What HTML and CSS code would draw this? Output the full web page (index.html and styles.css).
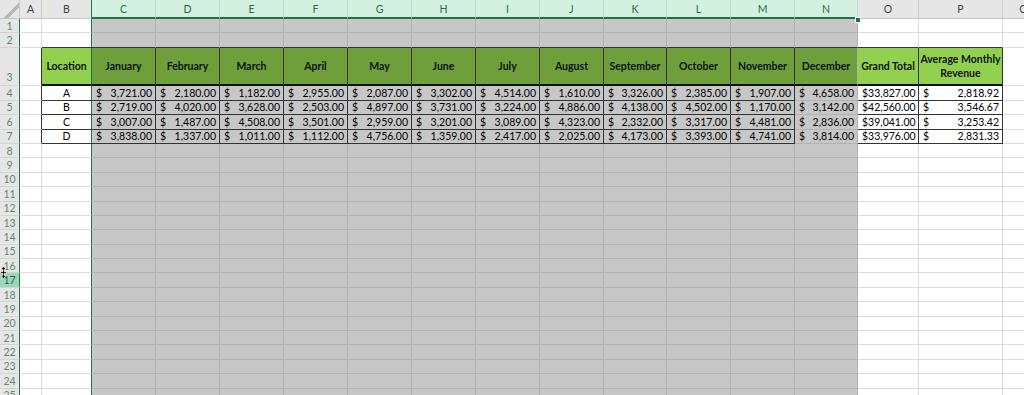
FILE: index.html
```html
<!DOCTYPE html>
<html>
<head>
<meta charset="utf-8">
<title>Revenue by Location</title>
<link rel="stylesheet" href="styles.css">
</head>
<body>
<div class="sheet">
  <div class="row hdr">
    <div class="corner"></div><div>A</div><div>B</div><div>C</div><div>D</div><div>E</div><div>F</div><div>G</div><div>H</div><div>I</div><div>J</div><div>K</div><div>L</div><div>M</div><div>N</div><div>O</div><div>P</div><div>Q</div>
  </div>
  <div class="row">
    <div>1</div><div></div><div></div><div></div><div></div><div></div><div></div><div></div><div></div><div></div><div></div><div></div><div></div><div></div><div class="act"></div><div></div><div></div><div></div>
  </div>
  <div class="row r2">
    <div>2</div><div></div><div></div><div></div><div></div><div></div><div></div><div></div><div></div><div></div><div></div><div></div><div></div><div></div><div></div><div></div><div></div><div></div>
  </div>
  <div class="row r3 tb">
    <div>3</div><div></div><div>Location</div><div>January</div><div>February</div><div>March</div><div>April</div><div>May</div><div>June</div><div>July</div><div>August</div><div>September</div><div>October</div><div>November</div><div>December</div><div>Grand Total</div><div>Average Monthly Revenue</div><div></div>
  </div>
  <div class="row d tb">
    <div>4</div><div></div><div>A</div>
    <div><span>$</span><span>3,721.00</span></div><div><span>$</span><span>2,180.00</span></div><div><span>$</span><span>1,182.00</span></div><div><span>$</span><span>2,955.00</span></div><div><span>$</span><span>2,087.00</span></div><div><span>$</span><span>3,302.00</span></div><div><span>$</span><span>4,514.00</span></div><div><span>$</span><span>1,610.00</span></div><div><span>$</span><span>3,326.00</span></div><div><span>$</span><span>2,385.00</span></div><div><span>$</span><span>1,907.00</span></div><div><span>$</span><span>4,658.00</span></div>
    <div><span>$</span><span>33,827.00</span></div><div><span>$</span><span>2,818.92</span></div><div></div>
  </div>
  <div class="row d tb">
    <div>5</div><div></div><div>B</div>
    <div><span>$</span><span>2,719.00</span></div><div><span>$</span><span>4,020.00</span></div><div><span>$</span><span>3,628.00</span></div><div><span>$</span><span>2,503.00</span></div><div><span>$</span><span>4,897.00</span></div><div><span>$</span><span>3,731.00</span></div><div><span>$</span><span>3,224.00</span></div><div><span>$</span><span>4,886.00</span></div><div><span>$</span><span>4,138.00</span></div><div><span>$</span><span>4,502.00</span></div><div><span>$</span><span>1,170.00</span></div><div><span>$</span><span>3,142.00</span></div>
    <div><span>$</span><span>42,560.00</span></div><div><span>$</span><span>3,546.67</span></div><div></div>
  </div>
  <div class="row d tb">
    <div>6</div><div></div><div>C</div>
    <div><span>$</span><span>3,007.00</span></div><div><span>$</span><span>1,487.00</span></div><div><span>$</span><span>4,508.00</span></div><div><span>$</span><span>3,501.00</span></div><div><span>$</span><span>2,959.00</span></div><div><span>$</span><span>3,201.00</span></div><div><span>$</span><span>3,089.00</span></div><div><span>$</span><span>4,323.00</span></div><div><span>$</span><span>2,332.00</span></div><div><span>$</span><span>3,317.00</span></div><div><span>$</span><span>4,481.00</span></div><div><span>$</span><span>2,836.00</span></div>
    <div><span>$</span><span>39,041.00</span></div><div><span>$</span><span>3,253.42</span></div><div></div>
  </div>
  <div class="row d tb">
    <div>7</div><div></div><div>D</div>
    <div><span>$</span><span>3,838.00</span></div><div><span>$</span><span>1,337.00</span></div><div><span>$</span><span>1,011.00</span></div><div><span>$</span><span>1,112.00</span></div><div><span>$</span><span>4,756.00</span></div><div><span>$</span><span>1,359.00</span></div><div><span>$</span><span>2,417.00</span></div><div><span>$</span><span>2,025.00</span></div><div><span>$</span><span>4,173.00</span></div><div><span>$</span><span>3,393.00</span></div><div><span>$</span><span>4,741.00</span></div><div><span>$</span><span>3,814.00</span></div>
    <div><span>$</span><span>33,976.00</span></div><div><span>$</span><span>2,831.33</span></div><div></div>
  </div>
  <div class="row"><div>8</div><div></div><div></div><div></div><div></div><div></div><div></div><div></div><div></div><div></div><div></div><div></div><div></div><div></div><div></div><div></div><div></div><div></div></div>
  <div class="row"><div>9</div><div></div><div></div><div></div><div></div><div></div><div></div><div></div><div></div><div></div><div></div><div></div><div></div><div></div><div></div><div></div><div></div><div></div></div>
  <div class="row"><div>10</div><div></div><div></div><div></div><div></div><div></div><div></div><div></div><div></div><div></div><div></div><div></div><div></div><div></div><div></div><div></div><div></div><div></div></div>
  <div class="row"><div>11</div><div></div><div></div><div></div><div></div><div></div><div></div><div></div><div></div><div></div><div></div><div></div><div></div><div></div><div></div><div></div><div></div><div></div></div>
  <div class="row"><div>12</div><div></div><div></div><div></div><div></div><div></div><div></div><div></div><div></div><div></div><div></div><div></div><div></div><div></div><div></div><div></div><div></div><div></div></div>
  <div class="row"><div>13</div><div></div><div></div><div></div><div></div><div></div><div></div><div></div><div></div><div></div><div></div><div></div><div></div><div></div><div></div><div></div><div></div><div></div></div>
  <div class="row"><div>14</div><div></div><div></div><div></div><div></div><div></div><div></div><div></div><div></div><div></div><div></div><div></div><div></div><div></div><div></div><div></div><div></div><div></div></div>
  <div class="row"><div>15</div><div></div><div></div><div></div><div></div><div></div><div></div><div></div><div></div><div></div><div></div><div></div><div></div><div></div><div></div><div></div><div></div><div></div></div>
  <div class="row"><div>16</div><div></div><div></div><div></div><div></div><div></div><div></div><div></div><div></div><div></div><div></div><div></div><div></div><div></div><div></div><div></div><div></div><div></div></div>
  <div class="row"><div class="hov">17</div><div></div><div></div><div></div><div></div><div></div><div></div><div></div><div></div><div></div><div></div><div></div><div></div><div></div><div></div><div></div><div></div><div></div></div>
  <div class="row"><div>18</div><div></div><div></div><div></div><div></div><div></div><div></div><div></div><div></div><div></div><div></div><div></div><div></div><div></div><div></div><div></div><div></div><div></div></div>
  <div class="row"><div>19</div><div></div><div></div><div></div><div></div><div></div><div></div><div></div><div></div><div></div><div></div><div></div><div></div><div></div><div></div><div></div><div></div><div></div></div>
  <div class="row"><div>20</div><div></div><div></div><div></div><div></div><div></div><div></div><div></div><div></div><div></div><div></div><div></div><div></div><div></div><div></div><div></div><div></div><div></div></div>
  <div class="row"><div>21</div><div></div><div></div><div></div><div></div><div></div><div></div><div></div><div></div><div></div><div></div><div></div><div></div><div></div><div></div><div></div><div></div><div></div></div>
  <div class="row"><div>22</div><div></div><div></div><div></div><div></div><div></div><div></div><div></div><div></div><div></div><div></div><div></div><div></div><div></div><div></div><div></div><div></div><div></div></div>
  <div class="row"><div>23</div><div></div><div></div><div></div><div></div><div></div><div></div><div></div><div></div><div></div><div></div><div></div><div></div><div></div><div></div><div></div><div></div><div></div></div>
  <div class="row"><div>24</div><div></div><div></div><div></div><div></div><div></div><div></div><div></div><div></div><div></div><div></div><div></div><div></div><div></div><div></div><div></div><div></div><div></div></div>
  <div class="row"><div>25</div><div></div><div></div><div></div><div></div><div></div><div></div><div></div><div></div><div></div><div></div><div></div><div></div><div></div><div></div><div></div><div></div><div></div></div>

  <div class="handle"></div>
  <svg class="cursor" width="7" height="13" viewBox="0 0 7 13">
    <path d="M3.5 0.5 L6 3.5 H4.2 V5.7 H6.5 V7.3 H4.2 V9.5 H6 L3.5 12.5 L1 9.5 H2.8 V7.3 H0.5 V5.7 H2.8 V3.5 H1 Z" fill="#000" stroke="#fff" stroke-width="0.6"/>
  </svg>
</div>
</body>
</html>
```
FILE: styles.css
```css
html, body {
  margin: 0;
  padding: 0;
  overflow: hidden;
  background: #ffffff;
}

body {
  font-family: Lato, "Liberation Sans", sans-serif;
  font-size: 10.5px;
  color: #000;
}

.sheet {
  position: relative;
  width: 1045px;
}

.row {
  display: grid;
  grid-template-columns: 20px 22px 50px 64px 64px 64px 64px 64px 64px 64px 64px 63px 64px 64px 63px 61px 84px 42px;
  height: 14.4px;
}

.row > * {
  box-sizing: border-box;
  display: flex;
  align-items: center;
  min-width: 0;
  overflow: hidden;
  white-space: nowrap;
  border-right: 1px solid #dcdcdc;
  border-bottom: 1px solid #dcdcdc;
}

/* selected columns C:N */
.row > :nth-child(n+4):nth-child(-n+15) {
  background: #c7c7c7;
  border-right-color: #b2b2b2;
  border-bottom-color: #b2b2b2;
}

.row > .act {
  background: #ffffff;
}

/* row headers */
.row > :first-child {
  justify-content: center;
  background: #e6e6e6;
  color: #5e8a6f;
  border-right: 1px solid #217346;
  border-bottom-color: #d3d3d3;
}

.row > .hov {
  background: #9fd6b8;
  color: #1f6a41;
}

/* column headers */
.hdr {
  height: 19px;
}

.hdr > * {
  justify-content: center;
  background: #e6e6e6;
  color: #444;
  border-right: 1px solid #cdcdcd;
  border-bottom: 1px solid #c4c4c4;
}

.row.hdr > :nth-child(n+4):nth-child(-n+15) {
  background: #d3f0e0;
  color: #217346;
  border-right-color: #bcdcc9;
  border-bottom: 2px solid #217346;
}

.row.hdr > .corner {
  background: #e6e6e6 linear-gradient(135deg, transparent 0 58%, #b8b8b8 58% 72%, transparent 72%);
  border-right: 1px solid #cdcdcd;
  border-bottom: 1px solid #c4c4c4;
}

/* selection edges */
.row > :nth-child(3),
.row > :nth-child(15) {
  border-right-color: #217346;
}

/* table outline */
.r2 > :nth-child(n+3):nth-child(-n+17) {
  border-bottom-color: #333;
}

.tb > :nth-child(2) {
  border-right-color: #333;
}

.tb > :nth-child(n+4):nth-child(-n+14),
.tb > :nth-child(16),
.tb > :nth-child(17) {
  border-right-color: #333;
  border-bottom-color: #333;
}

.tb > :nth-child(3),
.tb > :nth-child(15) {
  border-bottom-color: #333;
}

/* header row 3 */
.r3 {
  height: 38.6px;
}

.r3 > :first-child {
  align-items: flex-end;
  padding-bottom: 2px;
}

.r3 > :nth-child(n+3):nth-child(-n+17) {
  justify-content: center;
  text-align: center;
  font-weight: 700;
  color: #111;
  background: #92d050;
  border-bottom: 2px solid #111;
}

.row.r3 > :nth-child(n+4):nth-child(-n+15) {
  background: #6e9f3b;
  border-bottom: 2px solid #111;
}

.r3 > :nth-child(17) {
  white-space: normal;
  line-height: 14px;
}

/* data rows */
.d > :nth-child(3) {
  justify-content: center;
}

.d > :nth-child(n+4):nth-child(-n+17) {
  justify-content: space-between;
  padding: 0 3px 0 4px;
}

.d > :nth-child(16) {
  padding-left: 3px;
}

/* overlays */
.handle {
  position: absolute;
  left: 855px;
  top: 17px;
  width: 4px;
  height: 4px;
  background: #217346;
  border: 1px solid #fff;
}

.cursor {
  position: absolute;
  left: 0;
  top: 266px;
}
```
